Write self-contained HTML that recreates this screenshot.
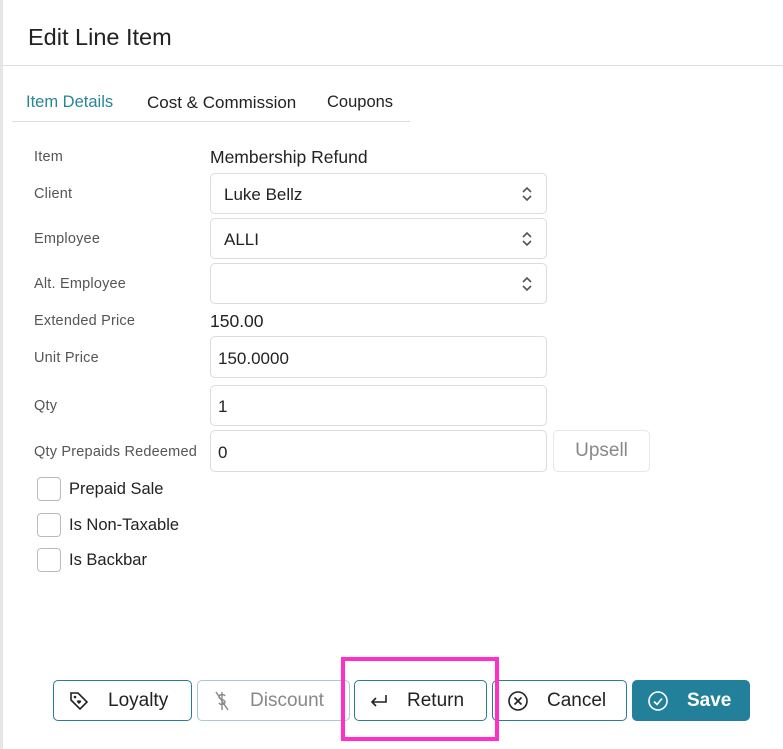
<!DOCTYPE html>
<html><head><style>
body{margin:0;width:783px;height:749px;background:#fff;font-family:"Liberation Sans",sans-serif;position:relative;overflow:hidden;color:#222}
.a{position:absolute}
.lbl{position:absolute;left:34px;font-size:14.5px;color:#555;letter-spacing:0.2px}
.inp{position:absolute;left:210px;width:335px;border:1px solid #dcdcdc;border-radius:5px;font-size:17px;color:#222;box-sizing:border-box;padding-left:13px;padding-top:3px;display:flex;align-items:center}
.cb{position:absolute;left:37px;width:24px;height:24px;border:1px solid #bbb;border-radius:4px;box-sizing:border-box}
.ct{position:absolute;left:69px;font-size:16.5px;color:#222}
.btn{position:absolute;top:680px;height:41px;border:1px solid #2a7d90;border-radius:5px;box-sizing:border-box;display:flex;align-items:center;font-size:19px;color:#222}
.btn svg{margin-left:14px;margin-right:18px}
.arr{position:absolute;right:14px;top:50%;margin-top:-8px}
</style></head><body>
<div class="a" style="left:0;top:0;width:3px;height:749px;background:#e6e6e6"></div>
<div class="a" style="left:28px;top:24px;font-size:23.5px;color:#222">Edit Line Item</div>
<div class="a" style="left:3px;top:65px;width:780px;height:1px;background:#ddd"></div>
<div class="a" style="left:26px;top:93px;font-size:16.5px;color:#2a8499">Item Details</div>
<div class="a" style="left:147px;top:93px;font-size:17px">Cost &amp; Commission</div>
<div class="a" style="left:327px;top:93px;font-size:16.5px">Coupons</div>
<div class="a" style="left:12px;top:121px;width:398px;height:1px;background:#ddd"></div>

<div class="lbl" style="top:149px">Item</div>
<div class="a" style="left:210px;top:147px;font-size:17.5px">Membership Refund</div>
<div class="lbl" style="top:186px">Client</div>
<div class="inp" style="top:173px;height:41px;width:337px">Luke Bellz<svg class="arr" width="10" height="16" viewBox="0 0 10 16"><path d="M1 6l4-4 4 4M1 10l4 4 4-4" fill="none" stroke="#555" stroke-width="1.6"/></svg></div>
<div class="lbl" style="top:231px">Employee</div>
<div class="inp" style="top:218px;height:41px;width:337px">ALLI<svg class="arr" width="10" height="16" viewBox="0 0 10 16"><path d="M1 6l4-4 4 4M1 10l4 4 4-4" fill="none" stroke="#555" stroke-width="1.6"/></svg></div>
<div class="lbl" style="top:276px">Alt. Employee</div>
<div class="inp" style="top:263px;height:41px;width:337px"><svg class="arr" width="10" height="16" viewBox="0 0 10 16"><path d="M1 6l4-4 4 4M1 10l4 4 4-4" fill="none" stroke="#555" stroke-width="1.6"/></svg></div>
<div class="lbl" style="top:313px">Extended Price</div>
<div class="a" style="left:210px;top:311px;font-size:17.5px">150.00</div>
<div class="lbl" style="top:350px">Unit Price</div>
<div class="inp" style="top:336px;height:42px;width:337px;padding-left:7px">150.0000</div>
<div class="lbl" style="top:398px">Qty</div>
<div class="inp" style="top:385px;height:41px;width:337px;padding-left:7px">1</div>
<div class="lbl" style="top:444px">Qty Prepaids Redeemed</div>
<div class="inp" style="top:430px;height:42px;width:337px;padding-left:7px">0</div>
<div class="a" style="left:553px;top:430px;width:97px;height:42px;border:1px solid #e6e6e6;border-radius:5px;box-sizing:border-box;display:flex;align-items:center;justify-content:center;font-size:19px;color:#888">Upsell</div>

<div class="cb" style="top:477px"></div><div class="ct" style="top:480px">Prepaid Sale</div>
<div class="cb" style="top:513px"></div><div class="ct" style="top:516px">Is Non-Taxable</div>
<div class="cb" style="top:548px"></div><div class="ct" style="top:551px">Is Backbar</div>

<div class="btn" style="left:53px;width:139px"><svg width="22" height="22" viewBox="0 0 22 22"><path d="M3 3h7l9 9-7 7-9-9z" fill="none" stroke="#222" stroke-width="1.6"/><circle cx="7" cy="7" r="1.3" fill="#222"/><path d="M11 14l-2-2a1.2 1.2 0 0 1 2-1.3 1.2 1.2 0 0 1 2 1.3z" fill="#222"/></svg>Loyalty</div>
<div class="btn" style="left:197px;width:153px;border-color:#a9c8cf;color:#888"><svg width="20" height="22" viewBox="0 0 20 22"><path d="M4 2l12 18M10 2v18M13 6c-1-2-6-2-6 1s6 2 6 5-5 3-6 1" fill="none" stroke="#888" stroke-width="1.4"/></svg>Discount</div>
<div class="btn" style="left:354px;width:133px"><svg width="20" height="16" viewBox="0 0 20 16"><path d="M17 2v7H3M7 5L3 9l4 4" fill="none" stroke="#222" stroke-width="1.6"/></svg>Return</div>
<div class="btn" style="left:492px;width:135px"><svg width="22" height="22" viewBox="0 0 22 22"><circle cx="11" cy="11" r="9" fill="none" stroke="#222" stroke-width="1.6"/><path d="M7.5 7.5l7 7M14.5 7.5l-7 7" stroke="#222" stroke-width="1.6"/></svg>Cancel</div>
<div class="btn" style="left:632px;width:118px;background:#23809b;border-color:#23809b;color:#fff;font-weight:bold"><svg width="22" height="22" viewBox="0 0 22 22"><circle cx="11" cy="11" r="9" fill="none" stroke="#fff" stroke-width="1.6"/><path d="M7 11.5l3 3 5-6" fill="none" stroke="#fff" stroke-width="1.6"/></svg>Save</div>

<div class="a" style="left:341px;top:657px;width:158px;height:84px;border:4px solid #ff2fc8;box-sizing:border-box"></div>
</body></html>
